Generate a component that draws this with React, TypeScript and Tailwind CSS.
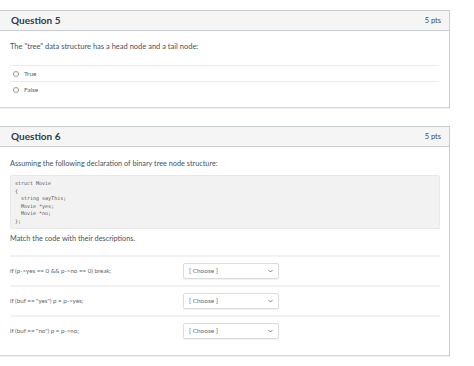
import React from "react";

function Header({ title }: { title: string }) {
  return (
    <div className="flex items-center justify-between h-[20px] bg-[#f5f5f5] border-b border-[#c7cdd1] pl-[11px] pr-[8px]">
      <span className="text-[10px] font-bold text-[#2d3b45]">{title}</span>
      <span className="text-[7.5px] text-[#3d4a55]">5 pts</span>
    </div>
  );
}

function Radio({ label }: { label: string }) {
  return (
    <div className="flex items-center h-[16px] border-t border-[#ebebeb] pl-[1px]">
      <span className="w-[6px] h-[6px] rounded-full border border-[#9a9a9a] bg-white ml-[2px] mr-[5px]" />
      <span className="text-[6.5px] text-[#5a6670]">{label}</span>
    </div>
  );
}

function MatchRow({ text }: { text: string }) {
  return (
    <div className="flex items-center h-[30px] border-t-2 border-[#f2f2f2]">
      <span className="w-[173px] text-[6.2px] text-[#5a6670]">{text}</span>
      <div className="flex items-center justify-between w-[96px] h-[16px] border border-[#dcdcdc] rounded-[2px] bg-white shadow-[0_1px_1px_rgba(0,0,0,0.06)] pl-[5px] pr-[5px]">
        <span className="text-[6.5px] text-[#6a6a6a]">[ Choose ]</span>
        <svg width="5" height="4" viewBox="0 0 5 4">
          <path d="M0.5 1 L2.5 3 L4.5 1" stroke="#777" strokeWidth="0.9" fill="none" />
        </svg>
      </div>
    </div>
  );
}

export default function App() {
  return (
    <div
      className="w-[474px] h-[366px] bg-white overflow-hidden"
      style={{ fontFamily: "Lato, 'Noto Sans', sans-serif" }}
    >
      <div className="pt-[10px] pl-0">
        <div className="ml-[-1px] w-[451px] border border-[#c7cdd1] border-b-[#d4d4d4] shadow-[0_1px_1px_rgba(0,0,0,0.05)]">
          <Header title="Question 5" />
          <div className="px-[10px] pt-[11px] pb-[10px]">
            <div className="text-[7.5px] text-[#46525c] leading-[10px] mb-[13px]">
              The "tree" data structure has a head node and a tail node:
            </div>
            <Radio label="True" />
            <Radio label="False" />
          </div>
        </div>

        <div className="h-[18px]" />

        <div className="ml-[-1px] w-[451px] border border-[#c7cdd1] border-b-[#d4d4d4] shadow-[0_1px_1px_rgba(0,0,0,0.05)]">
          <Header title="Question 6" />
          <div className="px-[10px] pt-[12px] pb-[10px]">
            <div className="text-[7.3px] text-[#46525c] leading-[10px] mb-[6px]">
              Assuming the following declaration of binary tree node structure:
            </div>
            <pre
              className="bg-[#f2f2f2] border border-[#e8e8e8] rounded-[2px] px-[4px] pt-[4px] pb-[3px] text-[5px] leading-[7.5px] text-[#555] w-[430px]"
              style={{ fontFamily: "'DejaVu Sans Mono', monospace" }}
            >
{`struct Movie
{
  string sayThis;
  Movie *yes;
  Movie *no;
};`}
            </pre>
            <div className="text-[7.3px] text-[#46525c] leading-[10px] mt-[5px] mb-[11px]">
              Match the code with their descriptions.
            </div>
            <div className="w-[430px]">
              <MatchRow text={'if (p->yes == 0 && p->no == 0) break;'} />
              <MatchRow text={'if (buf == "yes") p = p->yes;'} />
              <MatchRow text={'if (buf == "no") p = p->no;'} />
            </div>
          </div>
        </div>
      </div>
    </div>
  );
}
